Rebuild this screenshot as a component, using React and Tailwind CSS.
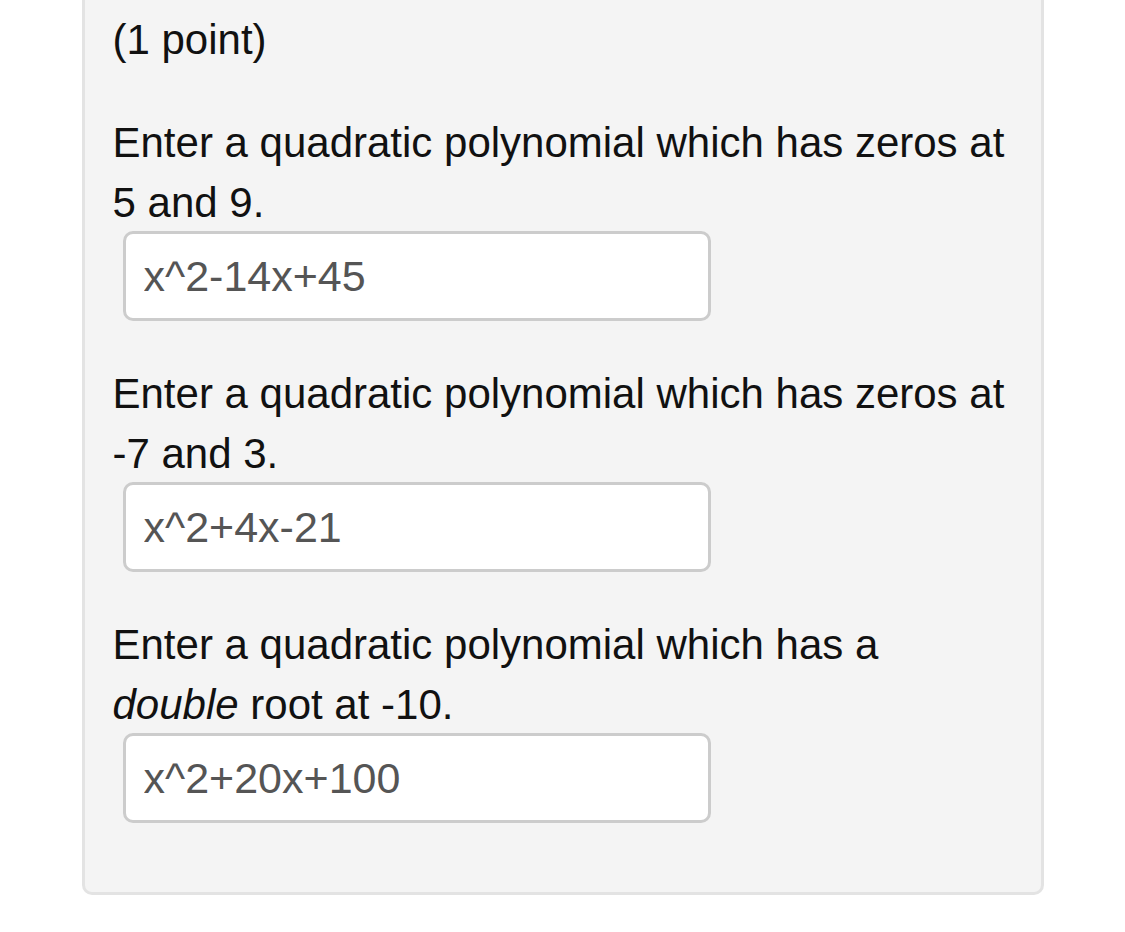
function AnswerBox({ value }) {
  return (
    <input
      type="text"
      defaultValue={value}
      readOnly
      className="block -mt-[2px] ml-[10px] w-[588px] h-[90px] px-[18px] bg-white border-[3px] border-[#cccccc] rounded-[10px] text-[43px] text-[#555555] outline-none"
    />
  );
}

function Question({ children, answer }) {
  return (
    <div className="mt-[43px]">
      <p className="leading-[60px]">{children}</p>
      <AnswerBox value={answer} />
    </div>
  );
}

export default function App() {
  return (
    <div className="min-h-screen bg-white pb-[40px]" style={{ fontFamily: '"Liberation Sans", Arial, sans-serif' }}>
      <div className="mx-auto w-[962px] bg-[#f4f4f4] border-x-[3px] border-b-[3px] border-[#e3e3e3] rounded-b-[10px] pl-[28px] pr-[28px] pt-[10px] pb-[69px] text-[42px] text-[#111111]">
        <p className="leading-[60px]">(1 point)</p>
        <Question answer="x^2-14x+45">
          Enter a quadratic polynomial which has zeros at 5 and 9.
        </Question>
        <Question answer="x^2+4x-21">
          Enter a quadratic polynomial which has zeros at -7 and 3.
        </Question>
        <Question answer="x^2+20x+100">
          Enter a quadratic polynomial which has a <i>double</i> root at -10.
        </Question>
      </div>
    </div>
  );
}
